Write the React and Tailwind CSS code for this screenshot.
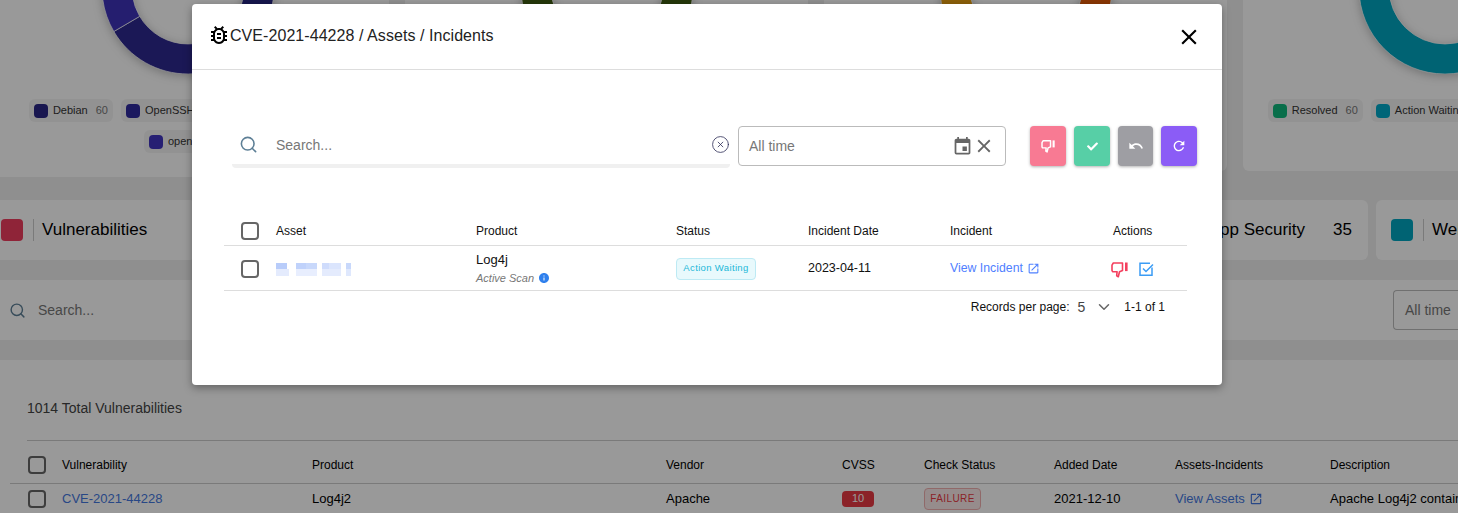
import { Search, CircleX, ChevronDown } from "lucide-react";
import { FaCheck } from "react-icons/fa";
import { MdEvent, MdClose, MdUndo, MdRefresh, MdOpenInNew, MdInfo, MdOutlineBugReport } from "react-icons/md";

function polar(cx, cy, r, deg) {
  const a = (deg * Math.PI) / 180;
  return [cx + r * Math.cos(a), cy + r * Math.sin(a)];
}

function arc(cx, cy, r0, r1, from, to) {
  const [x0, y0] = polar(cx, cy, r1, from);
  const [x1, y1] = polar(cx, cy, r1, to);
  const [x2, y2] = polar(cx, cy, r0, to);
  const [x3, y3] = polar(cx, cy, r0, from);
  const large = to - from > 180 ? 1 : 0;
  return `M${x0} ${y0}A${r1} ${r1} 0 ${large} 1 ${x1} ${y1}L${x2} ${y2}A${r0} ${r0} 0 ${large} 0 ${x3} ${y3}Z`;
}

function Donut({ segments }) {
  return (
    <svg width="172" height="172" viewBox="0 0 172 172" className="mx-auto block drop-shadow-[0_2px_5px_rgba(0,0,0,0.25)]">
      {segments.map((s) => (
        <path key={s.from} d={arc(86, 86, 56, 86, s.from, s.to)} fill={s.color} stroke="#fff" strokeWidth="0.7" />
      ))}
    </svg>
  );
}

function Chip({ color, label, dim = "60" }) {
  return (
    <div className="flex h-[23px] items-center gap-[5px] rounded-md bg-[#f4f4f4] px-[5px] text-[11px] whitespace-nowrap text-[#333]">
      <span className="h-[14px] w-[14px] rounded" style={{ background: color }} />
      <span>{label}</span>
      <span className="ml-[3px] text-[#777]">{dim}</span>
    </div>
  );
}

function ChartCard({ segments, children }) {
  return (
    <div className="min-h-[281px] w-[403px] shrink-0 rounded-md bg-white pt-3 pb-6">
      <Donut segments={segments} />
      <div className="mt-[25px] flex flex-wrap justify-center gap-2">{children}</div>
    </div>
  );
}

function Checkbox() {
  return <span className="block h-[18px] w-[18px] rounded-[4px] border-2 border-[#666]" />;
}

function ThumbIcon() {
  return (
    <svg width="18" height="16" viewBox="0 0 18 16" fill="none" stroke="#f43f5e" strokeWidth="1.6" strokeLinejoin="round">
      <path d="M1 3.2 2.3 1h9.2v7.5l-3 1.2-1.2 5-1.6-1 .4-4H1.6L1 8.5z" />
      <rect x="14" y="0.5" width="2.6" height="8.6" fill="#f43f5e" stroke="none" />
    </svg>
  );
}

function AssetBlur() {
  const blocks = [
    [0, 0, 11, "#b8ccfa"], [20, 0, 10, "#c0d2fb"], [30, 0, 11, "#c8d8fb"], [46, 0, 7, "#cfdcfc"], [53, 0, 12, "#dbe5fd"], [70, 0, 5, "#c8d8fb"],
    [0, 6, 13, "#e4ebfd"], [20, 6, 21, "#e8eefe"], [46, 6, 19, "#e4ebfd"], [70, 6, 5, "#dfe8fd"],
  ];
  return (
    <svg width="76" height="14" viewBox="0 0 76 14">
      {blocks.map(([x, y, w, fill]) => (
        <rect key={`${x}-${y}`} x={x} y={y} width={w} height={y ? 7 : 6} fill={fill} />
      ))}
    </svg>
  );
}

function BackgroundPage() {
  const cols = "grid-cols-[52px_250px_354px_176px_82px_130px_121px_155px_1fr]";
  return (
    <div className="h-[513px] w-[1458px] overflow-hidden bg-[#eeeeee] text-black">
      <div className="-mt-[110px] -ml-[14px] flex items-start gap-4">
        <ChartCard
          segments={[
            { from: -60, to: 30, color: "#262680" },
            { from: 30, to: 149.6, color: "#2e288f" },
            { from: 149.6, to: 240, color: "#3e33ba" },
            { from: 240, to: 300, color: "#262680" },
          ]}
        >
          <Chip color="#2a2785" label="Debian" />
          <Chip color="#302a9e" label="OpenSSH" />
          <Chip color="#3a32b0" label="openssh-sftp" dim="601" />
          <Chip color="#4035c0" label="openssl" />
        </ChartCard>
        <ChartCard
          segments={[
            { from: 0, to: 180, color: "#3f5c12" },
            { from: 180, to: 360, color: "#3f5c12" },
          ]}
        />
        <ChartCard
          segments={[
            { from: -90, to: 90, color: "#e65a07" },
            { from: 90, to: 270, color: "#e89e0f" },
          ]}
        />
        <div className="min-h-[281px] w-[403px] shrink-0 rounded-md bg-white pt-3 pb-6">
          <Donut
            segments={[
              { from: 0, to: 180, color: "#00a5c0" },
              { from: 180, to: 360, color: "#00a5c0" },
            ]}
          />
          <div className="mt-[25px] flex justify-center gap-2">
            <Chip color="#0fb87c" label="Resolved" />
            <Chip color="#00a8c8" label="Action Waiting" />
            <Chip color="#7c8a99" label="False Positives" />
          </div>
        </div>
      </div>

      <div className="mt-[23px] -ml-[14px] flex w-[1690px] gap-2">
        <div className="flex h-[60px] w-[210px] items-center rounded-md bg-white pl-[15px]">
          <span className="h-[22px] w-[22px] rounded bg-[#ef3c5e]" />
          <span className="mx-[10px] h-[22px] w-px bg-[#ccc]" />
          <span className="-mt-[1px] ml-[-2px] text-[17px]">Vulnerabilities</span>
        </div>
        <div className="h-[60px] flex-1 rounded-md bg-white" />
        <div className="flex h-[60px] w-[300px] items-center justify-end rounded-md bg-white pr-4 text-[17px]">
          <span className="-mt-[1px]">App Security</span>
          <span className="-mt-[1px] ml-[28px]">35</span>
        </div>
        <div className="flex h-[60px] w-[300px] items-center rounded-md bg-white pl-[15px]">
          <span className="h-[22px] w-[22px] rounded bg-[#00a5c0]" />
          <span className="mx-[10px] h-[22px] w-px bg-[#ccc]" />
          <span className="-mt-[1px] ml-[-2px] text-[17px]">Web</span>
        </div>
      </div>

      <div className="mt-[20px] flex h-[60px] items-center bg-white pl-[9px]">
        <Search size={17} className="text-[#5d7f96]" strokeWidth={2} />
        <span className="mt-[1px] ml-[12px] text-[14px] text-[#777]">Search...</span>
        <div className="ml-auto flex h-[40px] w-[65px] items-center rounded-l border border-r-0 border-[#bbb] pl-[11px] text-[14px] text-[#777]">
          All time
        </div>
      </div>

      <div className="mt-[20px] h-[200px] bg-white">
        <div className="pt-[38px] pl-[27px] text-[14px] leading-[21px] text-[#444]">1014 Total Vulnerabilities</div>
        <div className="mt-[21px] ml-[27px] border-t border-[#ccc]" />
        <div className={`ml-[10px] grid h-[43px] ${cols} items-center border-b border-[#ccc] pt-[5px] text-[12px] whitespace-nowrap`}>
          <span className="ml-[18px]"><Checkbox /></span>
          <span>Vulnerability</span>
          <span>Product</span>
          <span>Vendor</span>
          <span>CVSS</span>
          <span>Check Status</span>
          <span>Added Date</span>
          <span>Assets-Incidents</span>
          <span>Description</span>
        </div>
        <div className={`ml-[10px] grid h-[29px] ${cols} items-center overflow-hidden text-[13px] whitespace-nowrap`}>
          <span className="ml-[18px]"><Checkbox /></span>
          <span className="text-[#4478e0]">CVE-2021-44228</span>
          <span>Log4j2</span>
          <span>Apache</span>
          <span>
            <span className="flex h-[16px] w-[32px] items-center justify-center rounded bg-[#e83a44] text-[11px] text-white">10</span>
          </span>
          <span>
            <span className="flex h-[22px] w-[57px] items-center justify-center rounded border border-[#f0b0b0] bg-[#fbeaea] text-[10px] tracking-[0.4px] text-[#e83a44]">FAILURE</span>
          </span>
          <span>2021-12-10</span>
          <span className="flex items-center gap-1 text-[#4478e0]">
            View Assets <MdOpenInNew size={14} />
          </span>
          <span>Apache Log4j2 contains a remote code execution vulnerability</span>
        </div>
      </div>
    </div>
  );
}

function ActionButton({ color, children, narrow }) {
  return (
    <button className={`flex h-[40px] items-center justify-center rounded text-white shadow-[0_1px_3px_rgba(0,0,0,0.3)] ${narrow ? "w-[35px]" : "w-[36px]"}`} style={{ background: color }}>
      {children}
    </button>
  );
}

function IncidentsModal() {
  return (
    <div className="absolute top-[4px] left-[192px] h-[381px] w-[1030px] rounded bg-white shadow-[0_3px_8px_rgba(0,0,0,0.35)]">
      <div className="flex h-[66px] items-center border-b border-[#ddd] pr-[20px] pl-[18px]">
        <MdOutlineBugReport size={24} className="-mr-[1px] -ml-[3px] mb-[3px] text-black" />
        <span className="mb-[2px] text-[16px] tracking-[0.06px] text-[#222]">CVE-2021-44228 / Assets / Incidents</span>
        <MdClose size={26} className="ml-auto text-black" />
      </div>

      <div className="pt-[55px] pl-[40px]">
        <div className="flex items-start">
          <div className="relative flex h-[43px] w-[498px] items-center rounded-b border-b-4 border-[#f0f0f0] pl-[7px]">
            <Search size={19} className="text-[#5d7f96]" strokeWidth={2} />
            <span className="mt-[2px] ml-[18px] text-[14px] text-[#777]">Search...</span>
            <CircleX size={19} strokeWidth={1} className="absolute top-[10px] right-0 text-[#2b2b55]" />
          </div>
          <div className="mt-[1px] ml-[8px] flex h-[40px] w-[268px] items-center rounded border border-[#bbb] pr-[10px] pl-[10px] text-[14px] text-[#777]">
            <span>All time</span>
            <MdEvent size={21} className="ml-auto text-[#666]" />
            <MdClose size={22} className="text-[#666]" />
          </div>
          <div className="mt-[1px] ml-[24px] flex gap-2">
            <ActionButton color="#f87a93">
              <svg width="15" height="13" viewBox="0 0 18 16" fill="none" stroke="#fff" strokeWidth="1.8" strokeLinejoin="round">
                <path d="M1 3.2 2.3 1h9.2v7.5l-3 1.2-1.2 5-1.6-1 .4-4H1.6L1 8.5z" />
                <rect x="14" y="0.5" width="2.6" height="8.6" fill="#fff" stroke="none" />
              </svg>
            </ActionButton>
            <ActionButton color="#57cfa6">
              <FaCheck size={11} />
            </ActionButton>
            <ActionButton color="#9e9ea3" narrow>
              <MdUndo size={16} />
            </ActionButton>
            <ActionButton color="#8b5cf6">
              <MdRefresh size={16} />
            </ActionButton>
          </div>
        </div>

        <div className="mt-[47px] -ml-[8px] w-[963px]">
          <div className="grid h-[31px] grid-cols-[52px_200px_200px_132px_142px_163px_74px] items-center border-b border-[#ddd] pt-[2px] text-[12px] text-[#111]">
            <span className="pl-[17px]"><Checkbox /></span>
            <span>Asset</span>
            <span>Product</span>
            <span>Status</span>
            <span>Incident Date</span>
            <span>Incident</span>
            <span>Actions</span>
          </div>
          <div className="grid h-[45px] grid-cols-[52px_200px_200px_132px_142px_163px_74px] items-center border-b border-[#ddd] pt-[1px] text-[12px] text-[#111]">
            <span className="pl-[17px]"><Checkbox /></span>
            <span className="pt-[2px]"><AssetBlur /></span>
            <div>
              <div className="text-[13px] leading-[16px]">Log4j</div>
              <div className="mt-[4px] flex items-center gap-[4px] text-[11px] leading-[13px] text-[#777] italic">
                Active Scan <MdInfo size={12} className="-mt-[2px] text-[#2f80ed]" />
              </div>
            </div>
            <span>
              <span className="flex h-[22px] w-[80px] items-center justify-center rounded border border-[#bdeaf4] bg-[#e8f9fc] text-[9.5px] tracking-[0.35px] text-[#22b8d8]">
                Action Waiting
              </span>
            </span>
            <span className="text-[12.5px]">2023-04-11</span>
            <span className="flex items-center gap-[4px] text-[12.3px] text-[#4f80ff]">
              View Incident <MdOpenInNew size={13} />
            </span>
            <span className="flex items-center gap-[9px]">
              <span className="mt-[2px] -ml-[2px]"><ThumbIcon /></span>
              <svg width="16" height="16" viewBox="0 0 16 16" fill="none" stroke="#3b9cf5" strokeWidth="1.5">
                <path d="M14 6.5V14.2H2V2.2h10" />
                <path d="M5 7.5 8 10.5 15 3.5" />
              </svg>
            </span>
          </div>
        </div>

        <div className="mt-[7px] -ml-[8px] flex h-[18px] w-[941px] items-center justify-end text-[12px] text-[#111]">
          <span>Records per page:</span>
          <span className="ml-[8px] text-[14px] text-[#444]">5</span>
          <ChevronDown size={18} className="ml-[10px] text-[#666]" />
          <span className="ml-[11px]">1-1 of 1</span>
        </div>
      </div>
    </div>
  );
}

export default function App() {
  return (
    <div className="relative h-[513px] w-[1458px] overflow-hidden font-['Liberation_Sans',Arial,sans-serif]">
      <BackgroundPage />
      <div className="absolute inset-0 bg-black/40" />
      <IncidentsModal />
    </div>
  );
}
